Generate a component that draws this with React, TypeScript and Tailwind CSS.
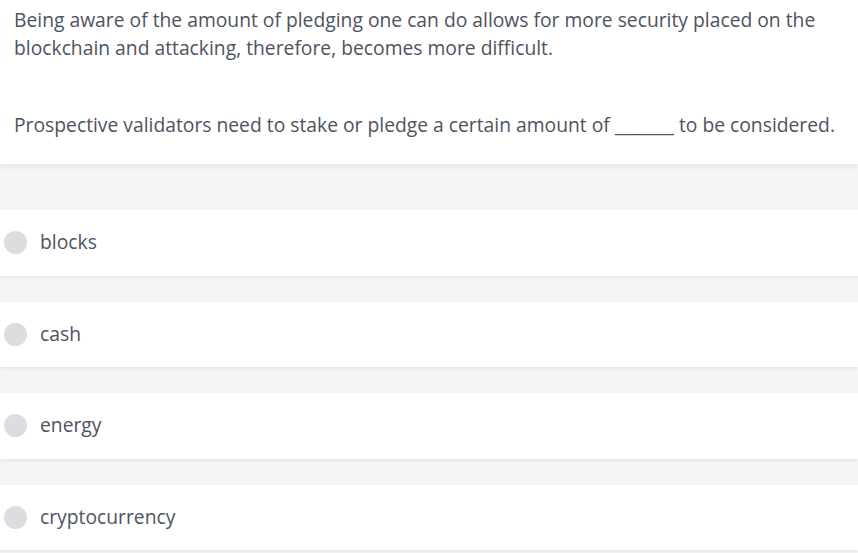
import React from 'react';

const options = ['blocks', 'cash', 'energy', 'cryptocurrency'];

function Option({ label }: { label: string }) {
  return (
    <label className="flex h-[65.5px] items-center bg-white shadow-[0_2px_3px_rgba(0,0,0,0.06)]">
      <span className="ml-1 h-[23px] w-[23px] rounded-full bg-[#dcdde0]" />
      <span className="ml-[13px] text-[19.3px] text-[#4e5360]">{label}</span>
    </label>
  );
}

export default function App() {
  return (
    <div
      className="min-h-[553px] w-[858px] bg-[#f4f5f7] text-[#4e5360]"
      style={{ fontFamily: '"Open Sans", "Noto Sans", sans-serif' }}
    >
      {/* Question card */}
      <div className="h-[164px] bg-white px-[14px] pt-[6px] text-[19.3px] leading-[28px] shadow-[0_3px_6px_rgba(0,0,0,0.06)]">
        <p>
          Being aware of the amount of pledging one can do allows for more security placed on the
          blockchain and attacking, therefore, becomes more difficult.
        </p>
        <p className="mt-[49px]">
          Prospective validators need to stake or pledge a certain amount of _______ to be considered.
        </p>
      </div>

      {/* Answers */}
      <div className="flex flex-col gap-[26px] pt-[46px]">
        {options.map((o) => (
          <Option key={o} label={o} />
        ))}
      </div>
    </div>
  );
}
